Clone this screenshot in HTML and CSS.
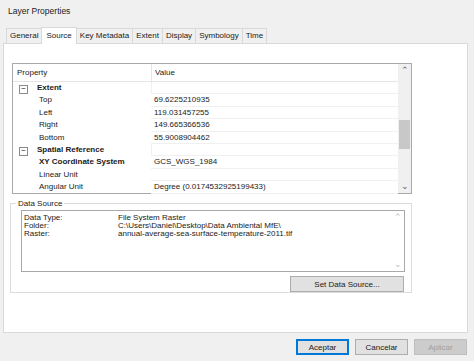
FILE: index.html
```html
<!DOCTYPE html>
<html lang="en">
<head>
    <meta charset="UTF-8">
    <title>Layer Properties</title>
    <link rel="stylesheet" href="styles.css">
</head>
<body>
    <div class="title">Layer Properties</div>

    <div class="tabs">
        <div class="tab">General</div>
        <div class="tab active">Source</div>
        <div class="tab">Key Metadata</div>
        <div class="tab">Extent</div>
        <div class="tab">Display</div>
        <div class="tab">Symbology</div>
        <div class="tab">Time</div>
    </div>

    <div class="panel">
        <div class="grid">
            <div class="grid-body">
                <div class="grid-head">
                    <div class="col-prop">Property</div>
                    <div class="col-val">Value</div>
                </div>
                <div class="row group">
                    <div class="col-prop"><span class="toggle">−</span>Extent</div>
                    <div class="col-val"></div>
                </div>
                <div class="row">
                    <div class="col-prop sub">Top</div>
                    <div class="col-val">69.6225210935</div>
                </div>
                <div class="row">
                    <div class="col-prop sub">Left</div>
                    <div class="col-val">119.031457255</div>
                </div>
                <div class="row">
                    <div class="col-prop sub">Right</div>
                    <div class="col-val">149.665366536</div>
                </div>
                <div class="row">
                    <div class="col-prop sub">Bottom</div>
                    <div class="col-val">55.9008904462</div>
                </div>
                <div class="row group">
                    <div class="col-prop"><span class="toggle">−</span>Spatial Reference</div>
                    <div class="col-val"></div>
                </div>
                <div class="row">
                    <div class="col-prop sub bold">XY Coordinate System</div>
                    <div class="col-val">GCS_WGS_1984</div>
                </div>
                <div class="row">
                    <div class="col-prop sub">Linear Unit</div>
                    <div class="col-val"></div>
                </div>
                <div class="row">
                    <div class="col-prop sub">Angular Unit</div>
                    <div class="col-val">Degree (0.0174532925199433)</div>
                </div>
            </div>
            <div class="scrollbar">
                <div class="arrow">&#8963;</div>
                <div class="track"><div class="thumb"></div></div>
                <div class="arrow">&#8964;</div>
            </div>
        </div>

        <fieldset class="source">
            <legend>Data Source</legend>
            <div class="source-box">
                <div class="source-text">
                    <div class="source-line"><span class="source-key">Data Type:</span>File System Raster</div>
                    <div class="source-line"><span class="source-key">Folder:</span>C:\Users\Daniel\Desktop\Data Ambiental MfE\</div>
                    <div class="source-line"><span class="source-key">Raster:</span>annual-average-sea-surface-temperature-2011.tif</div>
                </div>
                <div class="source-scroll">
                    <div class="arrow faint">&#8963;</div>
                    <div class="arrow faint">&#8964;</div>
                </div>
            </div>
            <div class="source-actions">
                <button class="btn wide">Set Data Source...</button>
            </div>
        </fieldset>
    </div>

    <div class="footer">
        <button class="btn default">Aceptar</button>
        <button class="btn">Cancelar</button>
        <button class="btn disabled">Aplicar</button>
    </div>
</body>
</html>
```

FILE: styles.css
```css
body {
    margin: 0;
    background-color: #f0f0f0;
    font-family: 'Liberation Sans', Arial, sans-serif;
    font-size: 8px;
    color: #1a1a1a;
    width: 474px;
    height: 361px;
    overflow: hidden;
}

.title {
    height: 22px;
    line-height: 22px;
    padding-left: 8px;
    font-size: 8.5px;
    color: #222;
}

.tabs {
    display: flex;
    align-items: flex-end;
    height: 21px;
    margin-left: 6px;
}

.tab {
    height: 14px;
    line-height: 14px;
    padding: 0 3px;
    background-color: #f0f0f0;
    border: 1px solid #d9d9d9;
    border-bottom: none;
    margin-right: -1px;
    color: #222;
}

.tab.active {
    height: 16px;
    line-height: 15px;
    background-color: #fff;
    position: relative;
    z-index: 1;
    margin-bottom: -1px;
    padding: 0 4px;
}

.panel {
    margin: 0 6px 0 3px;
    height: 290px;
    background-color: #fff;
    border: 1px solid #d9d9d9;
    box-sizing: border-box;
}

.grid {
    display: flex;
    margin: 19px 0 0 8px;
    width: 400px;
    height: 131px;
    border: 1px solid #a9a9a9;
    box-sizing: border-box;
}

.grid-body {
    flex: 1;
}

.grid-head {
    display: flex;
    height: 17px;
    line-height: 17px;
    border-bottom: 1px solid #e5e5e5;
}

.grid-head .col-val {
    border-left: 1px solid #e5e5e5;
}

.row {
    display: flex;
    height: 12.4px;
    line-height: 12.4px;
}

.row .col-val {
    border-bottom: 1px solid #f0f0f0;
    box-sizing: border-box;
}

.row.group .col-val {
    border-left: 1px solid #f0f0f0;
}

.col-prop {
    width: 138px;
    padding-left: 4px;
    white-space: nowrap;
    box-sizing: border-box;
    flex-shrink: 0;
}

.col-val {
    flex: 1;
    padding-left: 3px;
    white-space: nowrap;
}

.group .col-prop {
    font-weight: bold;
    padding-left: 6px;
}

.toggle {
    display: inline-block;
    width: 7px;
    height: 7px;
    line-height: 6px;
    border: 1px solid #8a8a8a;
    text-align: center;
    font-size: 8px;
    font-weight: normal;
    margin-right: 9px;
    vertical-align: -1px;
}

.sub {
    padding-left: 26px;
}

.bold {
    font-weight: bold;
}

.scrollbar {
    width: 13px;
    background-color: #f0f0f0;
    display: flex;
    flex-direction: column;
}

.arrow {
    height: 13px;
    line-height: 13px;
    text-align: center;
    font-size: 9px;
    color: #606060;
}

.arrow.faint {
    color: #bdbdbd;
}

.track {
    flex: 1;
    padding-top: 43px;
}

.thumb {
    height: 29px;
    background-color: #c8c8c8;
    margin: 0 1px;
}

.source {
    margin: 5px 0 0 6px;
    width: 402px;
    height: 94px;
    border: 1px solid #dcdcdc;
    padding: 0;
    box-sizing: border-box;
}

.source legend {
    padding: 0 2px;
    margin-left: 5px;
    color: #222;
}

.source-box {
    display: flex;
    margin: 2px 6px 0 10px;
    height: 62px;
    border: 1px solid #a9a9a9;
    box-sizing: border-box;
}

.source-text {
    flex: 1;
    padding: 3px 0 0 2px;
}

.source-line {
    height: 8px;
    line-height: 8px;
    white-space: nowrap;
}

.source-key {
    display: inline-block;
    width: 94px;
}

.source-scroll {
    width: 13px;
    display: flex;
    flex-direction: column;
    justify-content: space-between;
}

.source-actions {
    display: flex;
    justify-content: flex-end;
    margin: 4px 7px 0 0;
}

.btn {
    font-family: 'Liberation Sans', Arial, sans-serif;
    font-size: 8px;
    height: 16px;
    padding: 0;
    background-color: #e1e1e1;
    border: 1px solid #adadad;
    color: #1a1a1a;
}

.btn.wide {
    width: 114px;
}

.footer {
    display: flex;
    justify-content: flex-end;
    gap: 6px;
    margin: 6px 7px 0 0;
}

.footer .btn {
    width: 53px;
}

.btn.default {
    border: 1px solid #0078d7;
    box-shadow: inset 0 0 0 1px #0078d7;
}

.btn.disabled {
    background-color: #cccccc;
    border-color: #bfbfbf;
    color: #a0a0a0;
}
```
